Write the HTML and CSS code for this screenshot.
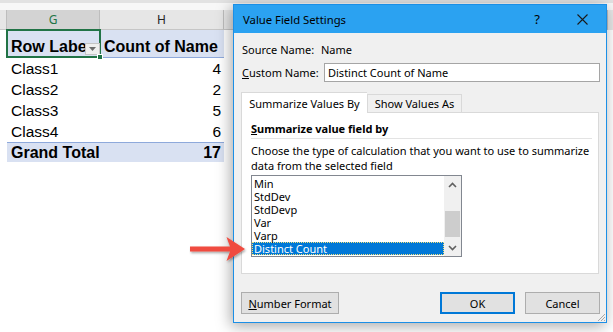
FILE: index.html
```html
<!DOCTYPE html>
<html>
<head>
<meta charset="utf-8">
<link rel="stylesheet" href="styles.css">
</head>
<body>
<div class="sheet">
  <div class="topbar"></div>
  <div class="colhead">
    <div class="ch ch-f"></div>
    <div class="ch ch-g">G</div>
    <div class="ch ch-h">H</div>
    <div class="ch ch-i"></div>
  </div>
  <div class="pivot">
    <div class="prow phead">
      <div class="cell cg selcell"><span class="txt">Row Labels</span><span class="dd"><svg width="7" height="4" viewBox="0 0 7 4"><path d="M0 0H7L3.5 4Z" fill="#6d6d6d"/></svg></span><span class="handle"></span></div>
      <div class="cell chh">Count of Name</div>
    </div>
    <div class="prow"><div class="cell cg">Class1</div><div class="cell chh num">4</div></div>
    <div class="prow"><div class="cell cg">Class2</div><div class="cell chh num">2</div></div>
    <div class="prow"><div class="cell cg">Class3</div><div class="cell chh num">5</div></div>
    <div class="prow"><div class="cell cg">Class4</div><div class="cell chh num">6</div></div>
    <div class="prow ptotal"><div class="cell cg">Grand Total</div><div class="cell chh num">17</div></div>
  </div>
</div>

<div class="dialog">
  <div class="titlebar">
    <span class="title">Value Field Settings</span>
    <span class="tb-help">?</span>
    <span class="tb-close"><svg width="11" height="11" viewBox="0 0 11 11"><path d="M0.5 0.5L10.5 10.5M10.5 0.5L0.5 10.5" stroke="#1a1a1a" stroke-width="1.1"/></svg></span>
  </div>
  <div class="dbody">
    <div class="frow source">
      <span class="lbl lbl-src">Source Name:</span>
      <span>Name</span>
    </div>
    <div class="frow custom">
      <span class="lbl lbl-cus"><u>C</u>ustom Name:</span>
      <div class="input">Distinct Count of Name</div>
    </div>
    <div class="tabs">
      <div class="tab active">Summarize Values By</div>
      <div class="tab">Show Values As</div>
    </div>
    <div class="panel">
      <div class="phdr"><u>S</u>ummarize value field by</div>
      <p class="pdesc">Choose the type of calculation that you want to use to summarize<br>data from the selected field</p>
      <div class="listbox">
        <div class="items">
          <div class="item">Min</div>
          <div class="item">StdDev</div>
          <div class="item">StdDevp</div>
          <div class="item">Var</div>
          <div class="item">Varp</div>
          <div class="item selected"><span class="focus">Distinct Count</span></div>
        </div>
        <div class="vscroll">
          <div class="sarrow"><svg width="9" height="6" viewBox="0 0 9 6"><path d="M1 5L4.5 1.5L8 5" fill="none" stroke="#606060" stroke-width="1.6"/></svg></div>
          <div class="strack"><div class="sthumb"></div></div>
          <div class="sarrow"><svg width="9" height="6" viewBox="0 0 9 6"><path d="M1 1L4.5 4.5L8 1" fill="none" stroke="#606060" stroke-width="1.6"/></svg></div>
        </div>
      </div>
    </div>
    <div class="btnrow">
      <button class="btn btn-nf"><u>N</u>umber Format</button>
      <span class="spacer"></span>
      <button class="btn btn-ok">OK</button>
      <button class="btn">Cancel</button>
    </div>
  </div>
  <svg class="grip" width="9" height="9" viewBox="0 0 9 9"><path d="M8 1L1 8M8 4L4 8M8 7L7 8" stroke="#a8a8a8" stroke-width="1"/></svg>
</div>

<svg class="arrow" width="64" height="30" viewBox="0 0 64 30">
  <defs><filter id="sh" x="-20%" y="-40%" width="140%" height="180%"><feDropShadow dx="1" dy="1.5" stdDeviation="1" flood-color="#000" flood-opacity="0.35"/></filter></defs>
  <path d="M2 11.5H42L38.5 2L57 14L38.5 26L42 16.5H2Z" fill="#f04b3f" filter="url(#sh)"/>
</svg>
</body>
</html>
```

FILE: styles.css
```css
* { box-sizing: border-box; }
html, body { margin: 0; padding: 0; }
body {
  width: 613px;
  height: 332px;
  overflow: hidden;
  background: #ffffff;
  position: relative;
  font-family: "Liberation Sans", Arial, sans-serif;
}

/* spreadsheet */
.topbar {
  height: 10px;
  background: #f7f7f7;
  border-top: 3px solid #e2e2e2;
}
.colhead {
  display: flex;
  height: 20px;
  background: #e6e6e6;
  font: 12px "Noto Sans", sans-serif;
  color: #222;
}
.ch {
  display: flex;
  align-items: center;
  justify-content: center;
  border-right: 1px solid #bdbdbd;
  border-bottom: 1px solid #c6c6c6;
  height: 100%;
}
.ch-f { width: 7px; }
.ch-g { width: 93px; background: #d3d3d3; color: #217346; }
.ch-h { width: 124px; }
.ch-i { width: 384px; }

.pivot { padding-left: 7px; }
.prow { display: flex; height: 21px; font-size: 15.5px; color: #000; }
.cell { display: flex; align-items: center; padding: 0 3px 0 4px; white-space: nowrap; overflow: hidden; }
.cg { width: 93px; }
.chh { width: 124px; }
.num { justify-content: flex-end; }
.phead {
  height: 28px;
  font-weight: bold;
  font-size: 16px;
  background: #d9e1f2;
  border-bottom: 1px solid #8ea9db;
  width: 217px;
}
.phead .cell { align-items: flex-end; padding-bottom: 1px; }
.ptotal {
  height: 20px;
  font-weight: bold;
  font-size: 16px;
  background: #d9e1f2;
  border-top: 1px solid #8ea9db;
  width: 217px;
}
.selcell { position: relative; overflow: visible; }
.selcell .txt { display: block; width: 74px; flex: none; overflow: hidden; }
.selcell::after {
  content: "";
  position: absolute;
  left: -1px; top: -1px; right: -1px; bottom: -1px;
  border: 2px solid #217346;
}
.dd {
  position: absolute;
  right: 0; top: 13px;
  width: 15px; height: 12px;
  background: #efefef;
  border: 1px solid #c4c4c4;
  display: flex; align-items: center; justify-content: center;
  z-index: 1;
}
.handle {
  position: absolute;
  right: -3px; bottom: -3px;
  width: 6px; height: 6px;
  background: #217346;
  border: 1px solid #fff;
  z-index: 2;
}

/* dialog */
.dialog {
  position: absolute;
  left: 233px; top: 4px;
  width: 374px; height: 319px;
  border: 1px solid #1b8fe6;
  background: #f0f0f0;
  box-shadow: -2px 3px 14px rgba(0,0,0,0.35);
  font-family: "Noto Sans", sans-serif;
  font-size: 11px;
  color: #000;
  display: flex;
  flex-direction: column;
  z-index: 5;
}
.titlebar {
  height: 28px;
  background: #2ba2f1;
  display: flex;
  align-items: center;
  padding-left: 9px;
  font-size: 11.3px;
  color: #000;
}
.title { flex: 1; }
.tb-help { width: 12px; margin-right: 34px; font-size: 13px; text-align: center; }
.tb-close { width: 11px; height: 11px; margin-right: 18px; display: flex; }

.dbody { flex: 1; padding: 0 6px 0 7px; display: flex; flex-direction: column; }
.frow { display: flex; align-items: center; white-space: nowrap; }
.source { margin-top: 8px; height: 16px; padding-left: 1px; }
.lbl-src { width: 79px; }
.custom { margin-top: 6px; height: 19px; padding-left: 1px; }
.lbl-cus { width: 82px; }
.input {
  width: 276px; height: 19px;
  background: #fff;
  border: 1px solid #a5a5a5;
  padding-left: 3px;
  display: flex; align-items: center;
}
.tabs { display: flex; align-items: flex-end; margin-top: 10px; height: 20px; position: relative; z-index: 1; }
.tab {
  height: 18px;
  padding: 0;
  background: #f0f0f0;
  border: 1px solid #d9d9d9;
  border-bottom: none;
  display: flex; align-items: center;
  width: 95px;
  justify-content: center;
  white-space: nowrap;
}
.tab.active {
  height: 21px;
  margin-bottom: -1px;
  background: #fff;
  width: 126px;
  border-right: none;
  padding-top: 1px;
}
.panel {
  width: 358px; height: 162px;
  background: #fff;
  border: 1px solid #d9d9d9;
  padding: 8px 6px 0 9px;
}
.phdr {
  font-weight: bold;
  height: 18px;
  line-height: 16px;
  border-bottom: 1px solid #e3e3e3;
}
.pdesc { margin: 4px 0 0; line-height: 15px; white-space: nowrap; }
.listbox {
  margin-top: 2px;
  width: 211px; height: 82px;
  border: 1px solid #828790;
  display: flex;
  background: #fff;
}
.items { flex: 1; padding-top: 1px; }
.item { height: 13px; line-height: 13px; padding-left: 2px; white-space: nowrap; }
.item.selected { background: #0078d7; color: #fff; padding-left: 0; }
.focus { display: block; height: 13px; outline: 1px dotted #f3e27a; outline-offset: -1px; padding-left: 2px; }
.vscroll { width: 17px; background: #f0f0f0; display: flex; flex-direction: column; }
.sarrow { height: 17px; display: flex; align-items: center; justify-content: center; }
.strack { flex: 1; display: flex; flex-direction: column; justify-content: flex-end; padding: 0 1px 2px; }
.sthumb { height: 26px; background: #cdcdcd; }

.btnrow { display: flex; margin-top: 18px; height: 22px; }
.btn {
  font: inherit;
  color: #000;
  background: #e1e1e1;
  border: 1px solid #adadad;
  height: 22px;
  width: 75px;
  padding: 0;
  margin-left: 10px;
}
.btn-nf { width: 98px; margin-left: 0; }
.btn-ok { border: 2px solid #0078d7; margin-left: 0; }
.spacer { flex: 1; }
.grip { position: absolute; right: 0; bottom: 0; }

.arrow { position: absolute; left: 188px; top: 235px; z-index: 10; }
```
